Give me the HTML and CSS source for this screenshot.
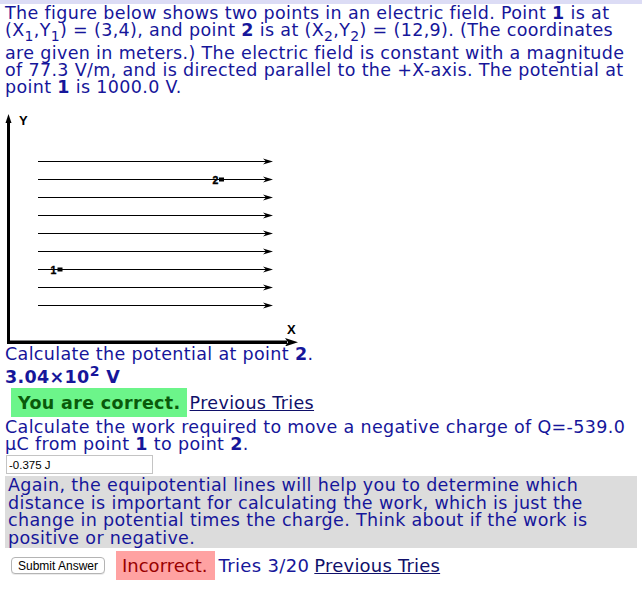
FILE: index.html
```html
<!DOCTYPE html>
<html>
<head>
<meta charset="utf-8">
<link rel="stylesheet" href="styles.css">
</head>
<body>
<div class="topbar"></div>
<div class="page">
  <p class="intro">The figure below shows two points in an electric field. Point <b>1</b> is at (X<sub>1</sub>,Y<sub>1</sub>) = (3,4), and point <b>2</b> is at (X<sub>2</sub>,Y<sub>2</sub>) = (12,9). (The coordinates are given in meters.) The electric field is constant with a magnitude of 77.3 V/m, and is directed parallel to the +X-axis. The potential at point <b>1</b> is 1000.0 V.</p>
  <svg class="figure" width="300" height="250" viewBox="0 0 300 250">
    <rect x="2" y="24" width="3" height="224" fill="#000"/>
    <polygon points="3.5,18 0.5,27 6.5,27" fill="#000"/>
    <rect x="2" y="244.5" width="280" height="3.5" fill="#000"/>
    <polygon points="293,246.2 280,242 283,246.2 280,250.5" fill="#000"/>
    <text x="14" y="29" class="axis-label">Y</text>
    <text x="282" y="238" class="axis-label">X</text>
    <g stroke="#000" stroke-width="1">
      <line x1="33" y1="65.5" x2="265" y2="65.5"/>
      <line x1="33" y1="83.5" x2="265" y2="83.5"/>
      <line x1="33" y1="101.5" x2="265" y2="101.5"/>
      <line x1="33" y1="119.5" x2="265" y2="119.5"/>
      <line x1="33" y1="137.5" x2="265" y2="137.5"/>
      <line x1="33" y1="155.5" x2="265" y2="155.5"/>
      <line x1="33" y1="173.5" x2="265" y2="173.5"/>
      <line x1="33" y1="191.5" x2="265" y2="191.5"/>
      <line x1="33" y1="209.5" x2="265" y2="209.5"/>
    </g>
    <g fill="#000">
      <polygon points="258,62.5 268,65.5 258,68.5 261,65.5"/>
      <polygon points="258,80.5 268,83.5 258,86.5 261,83.5"/>
      <polygon points="258,98.5 268,101.5 258,104.5 261,101.5"/>
      <polygon points="258,116.5 268,119.5 258,122.5 261,119.5"/>
      <polygon points="258,134.5 268,137.5 258,140.5 261,137.5"/>
      <polygon points="258,152.5 268,155.5 258,158.5 261,155.5"/>
      <polygon points="258,170.5 268,173.5 258,176.5 261,173.5"/>
      <polygon points="258,188.5 268,191.5 258,194.5 261,191.5"/>
      <polygon points="258,206.5 268,209.5 258,212.5 261,209.5"/>
      <rect x="214" y="81.5" width="5" height="4"/>
      <rect x="52.5" y="171.5" width="5" height="4"/>
    </g>
    <text x="207.5" y="87.5" class="pt-label">2</text>
    <text x="45.5" y="177.8" class="pt-label">1</text>
  </svg>
  <p class="line">Calculate the potential at point <b>2</b>.</p>
  <p class="line answer">3.04×10<sup>2</sup> V</p>
  <div class="status-row">
    <span class="correct">You are correct.</span><a class="tries-link" href="#">Previous Tries</a>
  </div>
  <p class="line question">Calculate the work required to move a negative charge of Q=-539.0 μC from point <b>1</b> to point <b>2</b>.</p>
  <input class="answer-input" type="text" value="-0.375 J">
  <div class="hint">Again, the equipotential lines will help you to determine which distance is important for calculating the work, which is just the change in potential times the charge. Think about if the work is positive or negative.</div>
  <div class="submit-row">
    <button class="submit" type="button">Submit Answer</button><span class="incorrect">Incorrect.</span><span class="tries">Tries 3/20</span><a class="tries-link" href="#">Previous Tries</a>
  </div>
</div>
</body>
</html>
```

FILE: styles.css
```css
html, body {
  margin: 0;
  padding: 0;
  background: #ffffff;
}

body {
  font-family: "DejaVu Sans", Verdana, sans-serif;
  font-size: 17.5px;
  line-height: 17px;
  letter-spacing: 0.35px;
  color: #16169a;
}

.topbar {
  height: 4px;
  background: #dcdcf5;
}

.page {
  padding: 0 5px;
}

p {
  margin: 0;
}

.intro {
  padding-top: 1px;
}

sub {
  font-size: 0.8em;
  vertical-align: sub;
}

sup {
  font-size: 0.8em;
  vertical-align: super;
}

.figure {
  display: block;
}

.axis-label {
  font-family: "Liberation Sans", Arial, sans-serif;
  font-weight: bold;
  font-size: 13px;
  letter-spacing: 0;
  fill: #000;
}

.pt-label {
  font-family: "Liberation Sans", Arial, sans-serif;
  font-weight: bold;
  font-size: 10.5px;
  letter-spacing: 0;
  fill: #000;
  stroke: #000;
  stroke-width: 0.4px;
}

.answer {
  font-weight: bold;
}

.status-row {
  display: flex;
  align-items: baseline;
  margin-top: 3px;
}

.correct {
  display: inline-block;
  margin-left: 6px;
  padding: 7px 6px 5px 7px;
  background: #6cf58a;
  color: #0a5a0a;
  font-weight: bold;
}

.tries-link {
  color: #10106a;
  text-decoration: underline;
  margin-left: 3px;
}

.question {
  margin-top: 2px;
}

.answer-input {
  display: block;
  box-sizing: border-box;
  width: 147px;
  height: 19px;
  margin: 2px 0 2px 1px;
  padding: 0 2px;
  border: 1px solid #c4c4c4;
  font-family: "Liberation Sans", Arial, sans-serif;
  font-size: 11.5px;
  letter-spacing: 0;
  color: #000;
  background: #fff;
}

.hint {
  background: #dcdcdc;
  padding: 1px 3px 1px 3px;
  line-height: 17.5px;
}

.submit-row {
  display: flex;
  align-items: center;
  margin-top: 3px;
}

.submit {
  box-sizing: border-box;
  width: 94px;
  height: 17px;
  margin-left: 6px;
  padding: 0;
  border: 1px solid #b4b4b4;
  border-radius: 4px;
  background: #ffffff;
  font-family: "Liberation Sans", Arial, sans-serif;
  font-size: 12px;
  letter-spacing: 0;
  color: #000;
  box-shadow: 0 1px 0 rgba(0,0,0,0.08);
}

.incorrect {
  margin-left: 11px;
  padding: 6px 8px 6px 6px;
  background: #ffa2a2;
  color: #990000;
  font-size: 18px;
  letter-spacing: 0;
}

.tries {
  margin-left: 3px;
  font-size: 18px;
}

.submit-row .tries-link {
  font-size: 18px;
  letter-spacing: 0.2px;
  margin-left: 5px;
}
```
